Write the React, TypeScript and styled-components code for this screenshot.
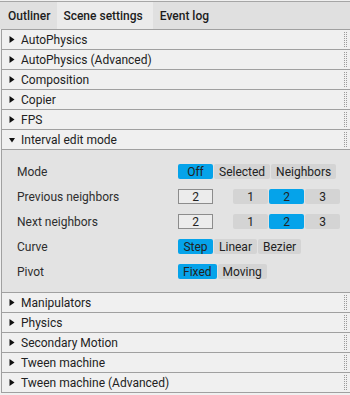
import styled, { createGlobalStyle } from "styled-components";

const GlobalStyle = createGlobalStyle`
  body {
    margin: 0;
    font-family: Roboto, "Liberation Sans", sans-serif;
  }
`;

const Frame = styled.div`
  width: 350px;
  height: 395px;
  overflow: hidden;
  padding-top: 1px;
  box-sizing: border-box;
  background: #f0f0f0;
  color: #222;
`;

const TabBar = styled.div`
  display: flex;
  height: 27px;
  border-top: 1px solid #a6a6a6;
  background: #e0e0e0;
`;

const Tab = styled.div<{ $active?: boolean }>`
  display: flex;
  align-items: center;
  padding: 0 7px 0 ${(p) => (p.$active ? 6 : 7)}px;
  padding-right: ${(p) => (p.$active ? 10 : 7)}px;
  font-size: 12px;
  font-weight: 500;
  color: #1c1c1c;
  background: ${(p) => (p.$active ? "#ebebeb" : "transparent")};

  &:first-child {
    padding-left: 8px;
  }
`;

const Panel = styled.div`
  margin-left: 1px;
  border-top: 1px solid #a0a0a0;
  border-left: 1px solid #a0a0a0;
`;

const Header = styled.div`
  display: flex;
  align-items: center;
  height: 19px;
  padding-left: 7px;
  border-bottom: 1px solid #a0a0a0;
  background: #f0f0f0;
  font-size: 12px;
  color: #222;
`;

const Title = styled.span`
  flex: 1;
  margin-left: 6px;
`;

const Content = styled.div`
  display: grid;
  grid-template-columns: 161px auto;
  grid-auto-rows: 15px;
  row-gap: 10px;
  align-items: center;
  padding: 14px 0 13px 15px;
  border-bottom: 1px solid #a0a0a0;
  background: #e3e3e3;
`;

const Label = styled.span`
  font-size: 12px;
  color: #2e2e2e;
`;

const Controls = styled.div`
  display: flex;
  align-items: center;
  height: 15px;
`;

const Segments = styled.div<{ $offset?: number }>`
  display: flex;
  gap: 1px;
  margin-left: ${(p) => p.$offset ?? 0}px;
`;

const Seg = styled.div<{ $on?: boolean; $fixed?: boolean }>`
  display: flex;
  align-items: center;
  justify-content: center;
  box-sizing: border-box;
  height: 15px;
  min-width: 35px;
  width: ${(p) => (p.$fixed ? "35px" : "auto")};
  padding: 0 ${(p) => (p.$fixed ? 0 : 5)}px;
  border-radius: 2px;
  font-size: 12px;
  color: #222;
  background: ${(p) => (p.$on ? "#05a3ea" : "#d4d4d4")};
`;

const NumBox = styled.div`
  display: flex;
  align-items: center;
  justify-content: center;
  box-sizing: border-box;
  width: 35px;
  height: 15px;
  border: 1px solid #8c8c8c;
  background: #ececec;
  font-size: 12px;
  color: #222;
`;

function Arrow({ open }: { open?: boolean }) {
  return open ? (
    <svg width="6" height="6" viewBox="0 0 6 6">
      <path d="M0 1h6L3 5.5z" fill="#111" />
    </svg>
  ) : (
    <svg width="6" height="7" viewBox="0 0 6 7">
      <path d="M0.5 0v7L5.5 3.5z" fill="#111" />
    </svg>
  );
}

function Grip() {
  const dots = [];
  for (let i = 0; i < 8; i++) {
    dots.push(<rect key={"a" + i} x={0} y={i * 2} width={1} height={1} />);
    dots.push(<rect key={"b" + i} x={2} y={i * 2} width={1} height={1} />);
  }
  return (
    <svg width="3" height="15" style={{ marginRight: 3 }} fill="#9a9a9a">
      {dots}
    </svg>
  );
}

function Section({ title, open }: { title: string; open?: boolean }) {
  return (
    <Header>
      <Arrow open={open} />
      <Title>{title}</Title>
      <Grip />
    </Header>
  );
}

function Choice({ items, value, fixed, offset }: { items: string[]; value: string; fixed?: boolean; offset?: number }) {
  return (
    <Segments $offset={offset}>
      {items.map((it) => (
        <Seg key={it} $on={it === value} $fixed={fixed}>
          {it}
        </Seg>
      ))}
    </Segments>
  );
}

const before = ["AutoPhysics", "AutoPhysics (Advanced)", "Composition", "Copier", "FPS"];
const after = ["Manipulators", "Physics", "Secondary Motion", "Tween machine", "Tween machine (Advanced)"];

export default function App() {
  return (
    <Frame>
      <GlobalStyle />
      <TabBar>
        <Tab>Outliner</Tab>
        <Tab $active>Scene settings</Tab>
        <Tab>Event log</Tab>
      </TabBar>
      <Panel>
        {before.map((t) => (
          <Section key={t} title={t} />
        ))}
        <Section title="Interval edit mode" open />
        <Content>
          <Label>Mode</Label>
          <Controls>
            <Choice items={["Off", "Selected", "Neighbors"]} value="Off" />
          </Controls>
          <Label>Previous neighbors</Label>
          <Controls>
            <NumBox>2</NumBox>
            <Choice items={["1", "2", "3"]} value="2" fixed offset={20} />
          </Controls>
          <Label>Next neighbors</Label>
          <Controls>
            <NumBox>2</NumBox>
            <Choice items={["1", "2", "3"]} value="2" fixed offset={20} />
          </Controls>
          <Label>Curve</Label>
          <Controls>
            <Choice items={["Step", "Linear", "Bezier"]} value="Step" />
          </Controls>
          <Label>Pivot</Label>
          <Controls>
            <Choice items={["Fixed", "Moving"]} value="Fixed" />
          </Controls>
        </Content>
        {after.map((t) => (
          <Section key={t} title={t} />
        ))}
      </Panel>
    </Frame>
  );
}
